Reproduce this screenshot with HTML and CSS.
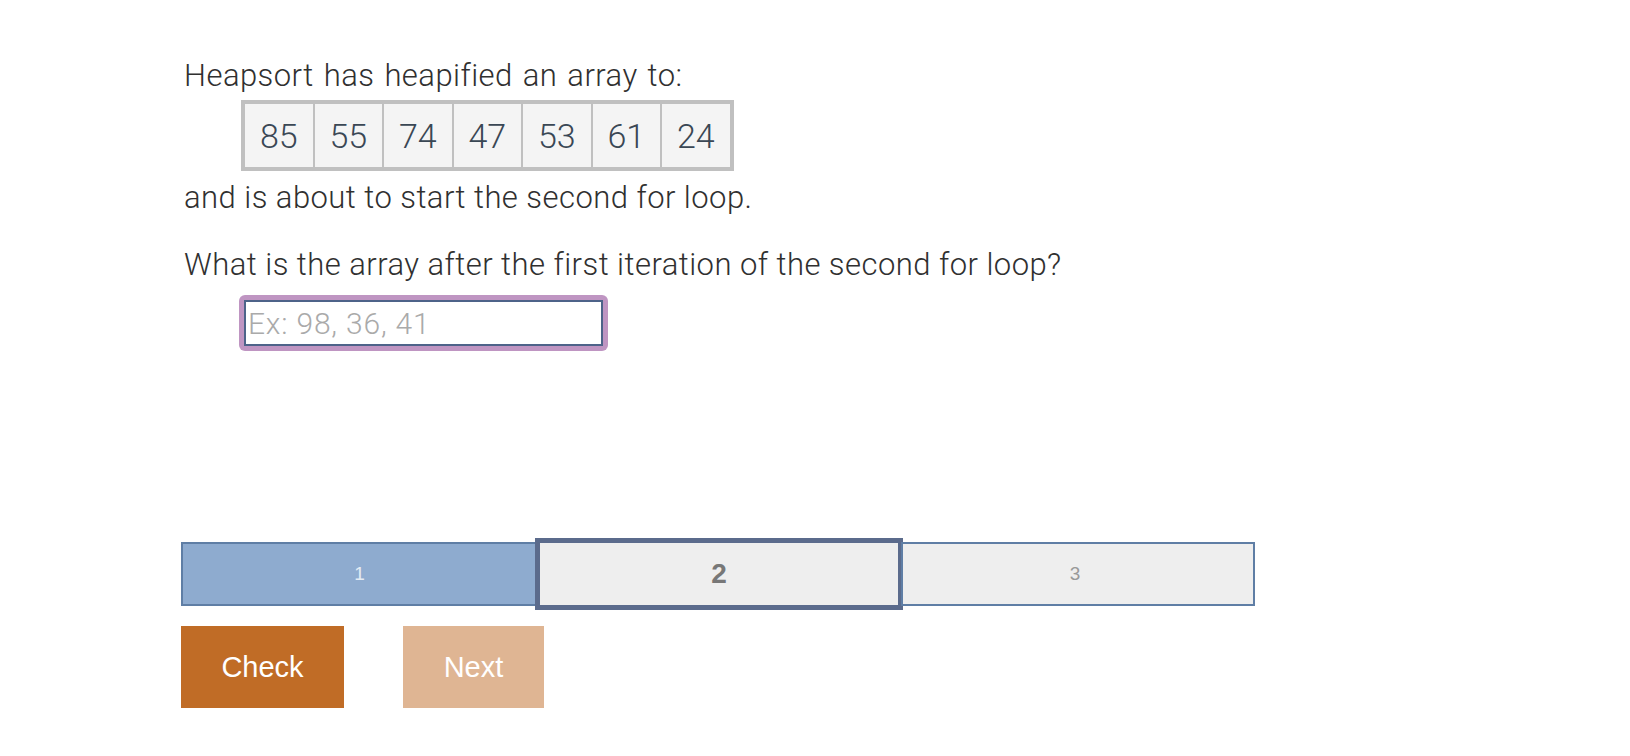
FILE: index.html
```
<!DOCTYPE html>
<html>
<head>
<meta charset="utf-8">
<link rel="stylesheet" href="styles.css">
</head>
<body>
<div class="page">
  <p class="text first">Heapsort has heapified an array to:</p>
  <div class="array">
    <div class="cell">85</div>
    <div class="cell">55</div>
    <div class="cell">74</div>
    <div class="cell">47</div>
    <div class="cell">53</div>
    <div class="cell">61</div>
    <div class="cell">24</div>
  </div>
  <p class="text after">and is about to start the second for loop.</p>
  <p class="text question">What is the array after the first iteration of the second for loop?</p>
  <div class="answer-ring">
    <input class="answer" type="text" placeholder="Ex: 98, 36, 41">
  </div>
  <div class="progress">
    <div class="seg seg-done">1</div>
    <div class="seg seg-current">2</div>
    <div class="seg seg-todo">3</div>
  </div>
  <div class="buttons">
    <button class="btn btn-check">Check</button>
    <button class="btn btn-next">Next</button>
  </div>
</div>
</body>
</html>
```
FILE: styles.css
```
html, body {
  margin: 0;
  padding: 0;
  background: #ffffff;
}
.page {
  padding: 56px 0 0 181px;
  font-family: Roboto, "Liberation Sans", sans-serif;
}
.text {
  margin: 0 0 0 3px;
  font-size: 31px;
  font-weight: 300;
  letter-spacing: 0.45px;
  line-height: 40px;
  color: #303030;
  font-variant-ligatures: none;
}
.first {
  word-spacing: 2px;
}
.array {
  display: flex;
  width: max-content;
  margin: 4px 0 0 60px;
  border: 3px solid #c0c0c0;
}
.cell {
  width: 67.5px;
  height: 63px;
  border: 1px solid #c0c0c0;
  background: #f4f4f4;
  display: flex;
  align-items: center;
  justify-content: center;
  font-size: 34px;
  font-weight: 300;
  color: #3a4754;
}
.after {
  margin-top: 7px;
}
.question {
  margin-top: 27px;
}
.answer-ring {
  width: max-content;
  margin: 10px 0 0 58px;
  padding: 5px;
  background: #bf95c2;
  border-radius: 6px;
}
.answer {
  display: block;
  box-sizing: border-box;
  width: 359px;
  height: 46px;
  margin: 0;
  padding: 0 2px;
  border: 2px solid #4d6389;
  background: #ffffff;
  font-family: Roboto, sans-serif;
  font-size: 30px;
  font-weight: 300;
  letter-spacing: 0.8px;
  color: #333;
  outline: none;
}
.answer::placeholder {
  color: #aaaaaa;
}
.progress {
  display: flex;
  align-items: center;
  margin-top: 187px;
  height: 72px;
  font-family: "Liberation Sans", Arial, sans-serif;
}
.seg {
  box-sizing: border-box;
  height: 64px;
  display: flex;
  align-items: center;
  justify-content: center;
  background: #eeeeee;
}
.seg-done {
  width: 357px;
  background: #8eabcf;
  border: 2px solid #5f7ea5;
  color: #e4ebf4;
  font-size: 19px;
}
.seg-current {
  width: 368px;
  height: 72px;
  margin: 0 -2px 0 -3px;
  border: 5px solid #5b6b8c;
  color: #777777;
  font-size: 28px;
  font-weight: bold;
}
.seg-todo {
  width: 354px;
  border: 2px solid #5f7ea5;
  color: #999999;
  font-size: 19px;
}
.seg-todo {
  padding-right: 6px;
}
.buttons {
  display: flex;
  gap: 59px;
  margin-top: 16px;
}
.btn {
  height: 82px;
  border: none;
  padding: 0;
  color: #ffffff;
  font-family: "Liberation Sans", Arial, sans-serif;
  font-size: 29px;
}
.btn-check {
  width: 163px;
  background: #c06c26;
}
.btn-next {
  width: 141px;
  background: #dfb593;
}
```
